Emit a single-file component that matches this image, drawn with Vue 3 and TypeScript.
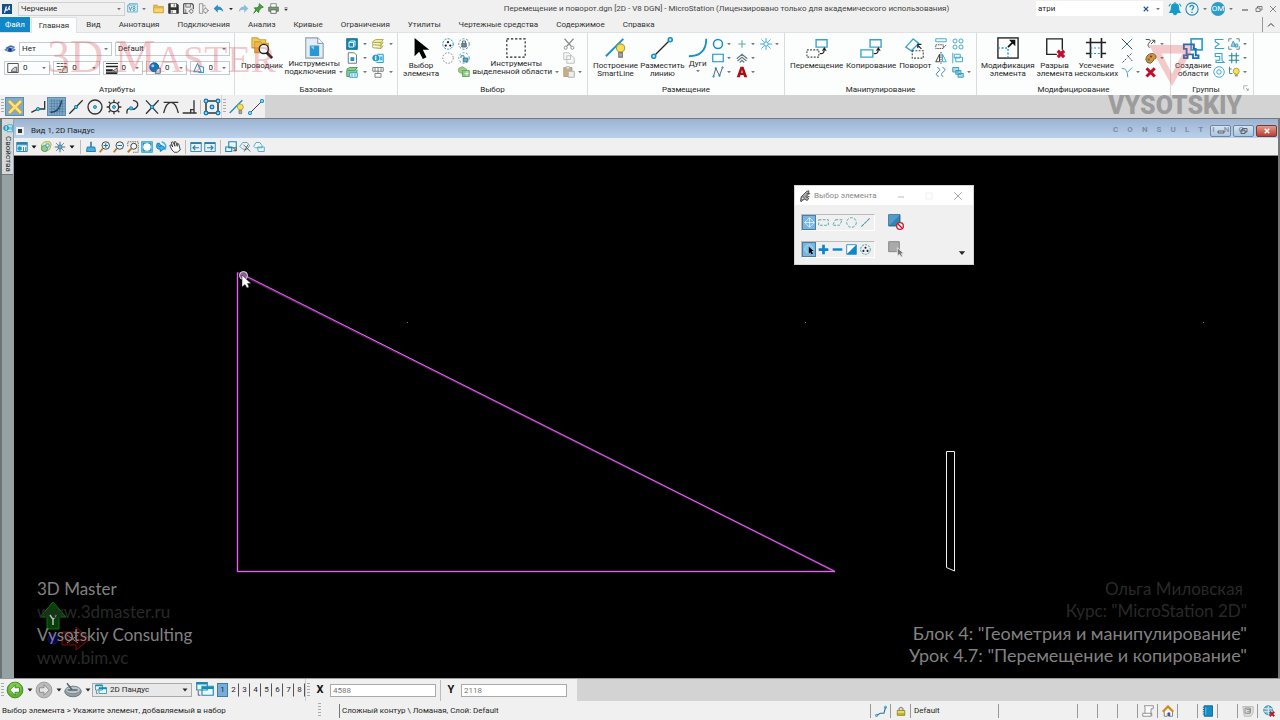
<script setup lang="ts">
import { ref } from 'vue'

interface Cell { icon?: string; caret?: boolean; label: string }
interface Big { icon: string; lines: string[]; caret?: 'inline' | 'below' }
interface Group { id: string; title: string; parts: (Big | Cell[])[] }

const icons: Record<string, string> = {
  logo: '<rect width="16" height="16" fill="#12508a" stroke="none"/><path d="M4 14L7 4M7 4Q5 10 8 10Q10 10 12 3Q10 9 13 9" stroke="#fff" stroke-width="1.8"/>',
  v8: '<path d="M1 13V3H13M3 3V1H15V13H1" stroke="#45a9cf"/><path d="M3 5L5 11L7 5M9.500 8Q8 6.500 9.500 5.200H11Q12.500 6.500 11 8H9.500Q8 9.500 9.500 11H11Q12.500 9.500 11 8" stroke="#248eb9"/>',
  folder: '<path d="M1 3H6L8 5H15V14H1Z" fill="#e9bd50" stroke="#cda039"/><path d="M1 7H15V14H1Z" fill="#f6d36e" stroke="#d8a93d"/>',
  save: '<path d="M1 1H13L15 3V15H1Z" fill="#333" stroke="#333"/><path d="M4 1H12V6H4ZM4 10H12V15H4Z" fill="#f5f5f5" stroke="none"/><path d="M9 2V5M6 11V14" stroke="#333"/>',
  saveset: '<path d="M1 1H13L15 3V9M1 1V15H7" stroke="#555" stroke-width="1.800"/><path d="M4 1H11V6H4ZM4 9V15" fill="#ddd" stroke="#666"/><circle cx="12" cy="12" r="2.500" stroke="#666"/><path d="M12 8V9M12 15V16M8 12H9" stroke="#666"/>',
  docset: '<path d="M2 1H7V15H2ZM7 4H11" stroke="#888"/><circle cx="11" cy="11" r="3" stroke="#888"/><path d="M11 6V8M11 14V16M14 11H16" stroke="#888"/>',
  undo: '<path d="M1 8L7 2V5Q14 5 15 13Q12 9 7 10V14Z" fill="#2f8ec9" stroke="none"/>',
  redo: '<path d="M15 8L9 2V5Q2 5 1 13Q4 9 9 10V14Z" fill="#8cbfdd" stroke="none"/>',
  pin: '<path d="M9 1L15 6L12 7L9 11L8 14L5 11L1 15L4 10L2 7L6 7L9 4Z" fill="#4c9d42" stroke="#347b32"/>',
  print: '<path d="M4 6V1H12V6" fill="#fff" stroke="#777"/><path d="M1 6H15V12H1Z" fill="#6aa761" stroke="#666"/><path d="M4 10H12V15H4Z" fill="#fff" stroke="#555"/>',
  caret: '<path d="M3 5H13L8 11Z" fill="currentColor" stroke="none"/>',
  custom: '<path d="M4 4H12" stroke="#333"/><path d="M3 7H13L8 13Z" fill="#333" stroke="none"/>',
  bell: '<path d="M2 12Q4 10 4 6Q4 2 8 2Q12 2 12 6Q12 10 14 12ZM6 13H10Q8 16 6 13M8 0V2" fill="#159bc9" stroke="#159bc9"/><path d="M1 5L3 2M13 2L15 5" stroke="#159bc9"/>',
  help: '<circle cx="8" cy="8" r="7" stroke="#168db8"/><path d="M5.500 6Q6 3.500 8.500 4Q11 5 9 7.500Q8 8 8 9.500M8 11V12.500" stroke="#168db8" stroke-width="1.500"/>',
  min: '<path d="M2 10H14" stroke-width="2"/>',
  vmin: '<path d="M2 8H14V12H2Z"/>',
  restore: '<path d="M2 6H10V13H2ZM5 6V3H14V10H10" stroke-width="1.300"/>',
  close: '<path d="M2 2L14 14M14 2L2 14"/>',
  up: '<path d="M2 11L8 5L14 11" stroke-width="2"/>',
  eye: '<path d="M1 9Q7 4 15 9Q9 14 1 9Z" fill="#7e9fd2" stroke="#456fae"/><path d="M3 7L9 4L14 6" stroke="#456fae" stroke-width="2"/><circle cx="8" cy="9" r="2.500" fill="#163d87" stroke="none"/>',
  level: '<path d="M1 2H15V14H1Z" stroke="#444"/><path d="M6 13H13V7Q10 6 8 9Q6 9 6 13Z" fill="#ccc" stroke="#555"/>',
  lstyle: '<path d="M1 2H14M1 6H14" stroke-dasharray="4 1" stroke="#555" stroke-width="1.500"/><path d="M8 14L10 8L15 7V14ZM2 10H7M4 14H8" stroke="#775" fill="#ddd"/>',
  weight: '<path d="M0 2H16" stroke="#222"/><path d="M0 6H16" stroke="#222" stroke-width="2"/><path d="M0 11H9M0 15H15" stroke="#222" stroke-width="3"/><path d="M9 12L15 8V14Z" fill="#ccc" stroke="#555"/>',
  ball: '<circle cx="7" cy="7" r="6" fill="#1674b9" stroke="#075394"/><circle cx="5" cy="5" r="2" fill="#8bd0f3" stroke="none"/><path d="M9 14Q9 9 15 8V15H8Z" fill="#dcebea" stroke="#557"/>',
  prio: '<path d="M1 13L6 2L11 13Z" stroke="#2878a7"/><path d="M8 5L14 7V14H7" stroke="#37a2d0" stroke-width="1.500"/>',
  explorer: '<path d="M1 1H7L9 3H16V12H1Z" fill="#f1ca58" stroke="#d0a13c"/><path d="M4 5H10L12 7H19V17H4Z" fill="#eab949" stroke="#d0a13c"/><circle cx="14" cy="13" r="5" fill="#eef7fb" stroke="#222" stroke-width="1.500"/><path d="M17 17L23 23" stroke="#222" stroke-width="3"/>',
  refdoc: '<path d="M3 1H16L22 7V23H3Z" fill="#e3edf3" stroke="#8aa1ae"/><path d="M16 1V7H22" fill="#fff" stroke="#8aa1ae"/><path d="M8 10H17V20H8Z" fill="#2998d4" stroke="#2998d4"/><path d="M8 10H12V14Z" fill="#8dd0f0" stroke="none"/>',
  cube: '<rect x="1" y="1" width="14" height="14" fill="#158abc" stroke="#075e8b"/><path d="M4 6H10V12H4ZM4 6L6 4H12L10 6M12 4V10L10 12" stroke="#fff"/>',
  sheets: '<path d="M1 5L5 2H15L12 6H2ZM1 9L12 10L15 5M1 13L12 14L15 10M1 5V13M12 6V14" fill="#f2e99c" stroke="#a8a647"/>',
  docblue: '<path d="M3 1H11L14 4V15H3Z" fill="#fff" stroke="#577"/><path d="M6 7H11V12H6Z" fill="#248cc2" stroke="none"/>',
  info: '<path d="M7 3H15V14H6" stroke="#159bc9" fill="#d4eef8"/><circle cx="5" cy="8" r="4" fill="#2ca2d3" stroke="#168db8"/><path d="M5 5V11" stroke="#fff" stroke-width="1.500"/><path d="M11 6V11M13 6V11" stroke="#159bc9"/>',
  sheetgreen: '<path d="M1 4L5 2H15L12 6H2ZM1 6V14H13L15 5" fill="#8bcc91" stroke="#459865"/><path d="M5 9H15V15H5Z" fill="#fff" stroke="#159bc9"/><path d="M8 10V14M12 10V14" stroke="#159bc9"/>',
  keys: '<path d="M1 2H15V7H1ZM4 2V7M8 2V7M12 2V7M8 7V10M4 10H12V15H4Z" stroke="#777"/>',
  arrow: '<path d="M5 1V21L10 16L14 24L18 22L14 14H21Z" fill="#000" stroke="none"/>',
  selall: '<circle cx="8" cy="8" r="7" stroke="#168db8" stroke-dasharray="3 1.500"/><circle cx="8" cy="5.500" r="1.500" fill="#222" stroke="none"/><circle cx="5" cy="10" r="1.500" fill="#222" stroke="none"/><circle cx="11" cy="10" r="1.500" fill="#222" stroke="none"/>',
  sellock: '<circle cx="8" cy="8" r="7" stroke="#4c8aa5" stroke-dasharray="3 2"/><path d="M5 7H11V12H5Z" fill="#789" stroke="#567"/><path d="M6 7V4H10V7" stroke="#567"/>',
  selnone: '<circle cx="8" cy="8" r="7" stroke="#777" stroke-dasharray="2 2"/>',
  selun: '<circle cx="8" cy="8" r="7" stroke="#49a4c9" stroke-dasharray="3 2"/><path d="M7 8H13V13H7Z" fill="#68a9c7" stroke="#378"/><path d="M4 8V5H8V8" stroke="#378"/>',
  green: '<path d="M1 3L6 1L12 5V8L8 11L1 8Z" fill="#9bcf84" stroke="#74ad66"/><path d="M6 6H15V14H6Z" fill="#8dcc82" stroke="#64a45d"/><path d="M12 7V13M9 10H14" stroke="#fff"/>',
  fence: '<rect x="2" y="2" width="20" height="20" stroke="#222" stroke-dasharray="2.500 2"/>',
  cut: '<path d="M2 1L11 11M14 1L5 11" stroke="#888" stroke-width="1.500"/><circle cx="3.500" cy="13" r="2" stroke="#888"/><circle cx="12.500" cy="13" r="2" stroke="#888"/>',
  copy: '<path d="M1 1H8L10 3V10H1ZM5 5H12L15 8V15H5Z" fill="#f7f7f7" stroke="#bbb"/>',
  paste: '<path d="M1 2H12V14H1Z" fill="#c7ae84" stroke="#b59c72"/><path d="M4 1H9V4H4ZM7 7H15V15H7Z" fill="#eee" stroke="#aaa"/>',
  smart: '<path d="M1 21L20 2" stroke="#168fca" stroke-width="2"/><circle cx="17" cy="12" r="4.500" fill="#f7dd58" stroke="#b39a2d"/><path d="M15 17H19V22H15Z" fill="#aaa" stroke="#777"/>',
  line: '<path d="M3 21L21 3" stroke="#222" stroke-width="1.300"/><circle cx="3" cy="21" r="2.200" fill="#bfeaff" stroke="#168fca" stroke-width="1.700"/><circle cx="21" cy="3" r="2.200" fill="#bfeaff" stroke="#168fca" stroke-width="1.700"/>',
  arc: '<path d="M2 21Q21 21 21 2" stroke="#168fca" stroke-width="2"/>',
  circle: '<circle cx="8" cy="8" r="6" stroke="#168fca" stroke-width="2"/>',
  plus: '<path d="M8 3V13M3 8H13" stroke="#5fae9e" stroke-width="1.500"/>',
  star: '<circle cx="8" cy="8" r="3" stroke="#168fca" fill="#fff"/><path d="M8 0V4M8 12V16M0 8H4M12 8H16M2 2L5 5M11 11L14 14M14 2L11 5M5 11L2 14" stroke="#37a2d0"/>',
  rect: '<path d="M1 3H15V13H1Z" stroke="#168fca" stroke-width="1.500"/>',
  multi: '<path d="M1 9L8 3L15 9M2 12L8 7L14 12M5 14L8 11L11 14" stroke="#667986" stroke-width="1.500"/>',
  curve: '<path d="M2 14L5 3L10 13L14 2" stroke="#456"/><circle cx="2" cy="14" r="1" stroke="#168fca"/><circle cx="5" cy="3" r="1" stroke="#168fca"/><circle cx="10" cy="13" r="1" stroke="#168fca"/><circle cx="14" cy="2" r="1" stroke="#168fca"/>',
  letter: '<path d="M1 15L6 1H10L15 15H11L10 12H6L5 15ZM7 9H9L8 5Z" fill="#a80f17" stroke="none"/>',
  move: '<path d="M11 3H23V11H11Z" stroke="#36a4ca" stroke-width="1.500"/><path d="M1 14H14V22H1Z" stroke="#444" stroke-dasharray="2 1.500"/><path d="M15 18Q20 19 20 13M18 15L20 12L22 15" stroke="#222"/>',
  copyel: '<path d="M11 3H23V11H11ZM1 14H14V22H1Z" stroke="#36a4ca" stroke-width="1.500"/><path d="M15 18Q20 19 20 13M18 15L20 12L22 15" stroke="#222"/>',
  rotate: '<path d="M2 11L10 2L16 7L8 15Z" stroke="#36a4ca" stroke-width="1.500"/><path d="M9 15H21V23H9Z" stroke="#444" stroke-dasharray="2 1.500"/><path d="M15 9L19 13M15 12V8H19" stroke="#222"/>',
  parallel: '<path d="M1 1H15V5H1Z" stroke="#36a4ca"/><path d="M1 9H11V14H1ZM11 12Q15 12 14 8" stroke="#444" stroke-dasharray="2 1"/>',
  array: '<g stroke="#36a4ca"><circle cx="4" cy="4" r="2.700"/><circle cx="12" cy="4" r="2.700"/><circle cx="4" cy="12" r="2.700"/><circle cx="12" cy="12" r="2.700"/></g>',
  mirror: '<path d="M6 3V13H1Z" stroke="#333"/><path d="M10 3V13H15Z" stroke="#37a4ca"/><path d="M8 0V16" stroke="#222" stroke-dasharray="2 1"/>',
  align: '<path d="M1 1V15M3 3H11V8H3ZM5 7H14V13H5Z" stroke="#36a4ca"/>',
  wave: '<path d="M3 2Q9 4 4 8T5 14M10 2Q16 4 11 8T11 14" stroke="#397a96"/>',
  order: '<path d="M1 2H9V8H1ZM5 6H12V11H5ZM8 10H15V15H8Z" fill="#afddea" stroke="#2c9ab9"/>',
  modify: '<rect x="1" y="1" width="22" height="22" stroke="#222" stroke-width="1.500"/><path d="M1 12H12V23" stroke="#168fca" stroke-width="1.500" stroke-dasharray="2 2"/><path d="M12 11L19 4" stroke="#111" stroke-width="2"/><path d="M13 3H20V10Z" fill="#111" stroke="none"/>',
  breakel: '<path d="M14 19H3V2H20V14" stroke="#222" stroke-width="1.500"/><path d="M15 15L22 22M22 15L15 22" stroke="#c20e2d" stroke-width="3.500"/>',
  trim: '<path d="M6 1V23M18 1V23M1 6H23M1 18H6M18 18H23" stroke="#222" stroke-width="1.800"/><path d="M6 12H18M6 18H18" stroke="#168fca" stroke-dasharray="2 2"/>',
  cross: '<path d="M1 1L15 15" stroke="#333"/><path d="M15 1L1 15" stroke="#267b9c"/>',
  trimto: '<path d="M2 14L7 9M9 7L14 2M8 4L15 12" stroke="#445" stroke-dasharray="3 1"/>',
  fillet: '<path d="M1 3Q9 3 9 15M9 8L15 2" stroke="#349ab5"/>',
  modcurve: '<path d="M1 2H6Q9 4 5 7Q2 9 6 13M8 8L13 3M9 3H13V7" stroke="#444"/>',
  palette: '<path d="M1 10Q2 2 10 2Q17 4 14 9Q11 8 11 12Q8 17 3 14Z" fill="#cb9646" stroke="#795629"/><circle cx="5" cy="10" r="1.500" fill="#357b4e" stroke="none"/><circle cx="8" cy="6" r="1.500" fill="#b32828" stroke="none"/>',
  redx: '<path d="M2 3L13 14M13 3L2 14" stroke="#c20e2d" stroke-width="4"/>',
  region: '<path d="M10 2H22V14H10Z" stroke="#36a4ca" stroke-width="2"/><path d="M2 8H13V13H15V20H18V23H12V19H6V23H2V20H5V13H2Z" stroke="#1a6dc0" stroke-width="2"/>',
  sum: '<path d="M14 2H3V5L8 8L3 12V14H15" stroke="#36a4ca" stroke-width="1.500"/>',
  snaps: '<path d="M1 5V1H5M11 1H15V5M1 11V15H5M11 15H15V11" stroke="#678"/><path d="M4 11L7 4L10 11ZM9 8H13V12H9Z" stroke="#36a4ca" fill="#9cd3e6"/>',
  region2: '<path d="M3 2H12V11L15 14H4V11H9V6H3Z" stroke="#36a4ca" stroke-width="1.400"/>',
  grid: '<path d="M5 1V15M11 1V15M1 5H15M1 11H15" stroke="#2688a5" stroke-width="1.500"/>',
  rings: '<circle cx="8" cy="8" r="7" stroke="#36a4ca"/><circle cx="8" cy="8" r="3" stroke="#36a4ca"/>',
  bulb: '<path d="M2 1V10H6M1 4H5" stroke="#486"/><circle cx="11" cy="7" r="4" fill="#f7df65" stroke="#bd9d1c"/><path d="M9 11H13V14H9Z" fill="#999" stroke="none"/>',
  launch: '<path d="M2 12V2H12M8 8L14 14M14 9V14H9" stroke="#555"/>',
  bigx: '<path d="M4 4L20 20M20 4L4 20" stroke="#c99b20" stroke-width="6"/><path d="M4 4L20 20M20 4L4 20" stroke="#ffe17c" stroke-width="3.500"/>',
  nearest: '<path d="M2 20L12 15H22V3" stroke="#333" stroke-width="2"/><circle cx="12" cy="15" r="2.500" fill="#3bc1f5" stroke="#1676aa"/>',
  keypt: '<path d="M0 3H24M0 7H24M0 11H24M0 15H24M0 19H24M4 0V24M8 0V24M12 0V24M16 0V24M20 0V24" stroke="#4c6e8b" stroke-width=".800"/><path d="M2 20Q16 20 19 2" stroke="#20425b" stroke-width="2"/><circle cx="15" cy="14" r="2" stroke="#1676aa"/>',
  midpt: '<path d="M2 22L22 2" stroke="#333" stroke-width="2"/><circle cx="12" cy="12" r="2.500" fill="#3bc1f5" stroke="#1676aa"/>',
  center: '<circle cx="12" cy="12" r="10.500" stroke="#333" stroke-width="2"/><circle cx="12" cy="12" r="2.300" fill="#3bc1f5" stroke="#1676aa"/>',
  origin: '<circle cx="12" cy="12" r="7" stroke="#333" stroke-width="2"/><path d="M12 1V5M12 19V23M1 12H5M19 12H23M4 4L7 7M17 17L20 20M20 4L17 7M7 17L4 20" stroke="#333" stroke-width="2"/><circle cx="12" cy="12" r="2.300" fill="#3bc1f5" stroke="#1676aa"/>',
  bisect: '<path d="M3 22Q2 14 8 14Q15 18 19 10Q20 3 12 2" stroke="#333" stroke-width="2"/><circle cx="9" cy="14" r="2.500" fill="#3bc1f5" stroke="#1676aa"/>',
  inter: '<path d="M3 2L21 22M22 2L3 22" stroke="#333" stroke-width="2"/><circle cx="12" cy="12" r="2.500" fill="#3bc1f5" stroke="#1676aa"/>',
  tangent: '<path d="M1 5H23M1 21Q5 5 12 5T23 21" stroke="#333" stroke-width="2"/>',
  perp: '<path d="M1 21H22M18 2V21M13 21V16H18" stroke="#333" stroke-width="2"/>',
  multisnap: '<rect x="4" y="4" width="16" height="16" stroke="#333" stroke-width="2"/><g fill="#73d3fa" stroke="#1676aa" stroke-width="1.600"><circle cx="4" cy="4" r="2.500"/><circle cx="20" cy="4" r="2.500"/><circle cx="4" cy="20" r="2.500"/><circle cx="20" cy="20" r="2.500"/><circle cx="12" cy="12" r="2.500"/></g>',
  attr: '<path d="M1 2H15V14H1ZM1 5H15" stroke="#2085b6"/><path d="M1 3H15" stroke="#2085b6" stroke-width="3"/><circle cx="5" cy="10" r="3" fill="#249bd0" stroke="none"/><path d="M10 8V14M13 8V14" stroke="#2085b6"/>',
  display: '<path d="M2 5L6 1H13L15 4L13 11L8 14L2 12Z" fill="#dceab6" stroke="#a6ad38"/><circle cx="6" cy="10" r="4" fill="#8bcf98" stroke="#56975e"/><path d="M8 4H12V8H8Z" fill="#fff" stroke="#429bb2"/>',
  sun: '<circle cx="8" cy="8" r="3" fill="#57b7dc" stroke="#45616e"/><path d="M8 1V4M8 12V15M1 8H4M12 8H15M3 3L5 5M13 3L11 5M3 13L5 11M11 11L13 13" stroke="#45616e"/>',
  brush: '<path d="M8 1V8" stroke="#2272a4" stroke-width="2"/><path d="M3 8H13L14 14H2Z" fill="#3fb7ed" stroke="#2272a4"/>',
  zoomin: '<circle cx="9" cy="6" r="5" fill="#eef8fb" stroke="#333"/><path d="M6 6H12M9 3V9" stroke="#1676aa" stroke-width="1.500"/><path d="M5 10L1 15" stroke="#b9812e" stroke-width="2.500"/>',
  zoomout: '<circle cx="9" cy="6" r="5" fill="#eef8fb" stroke="#333"/><path d="M6 6H12" stroke="#1676aa" stroke-width="1.500"/><path d="M5 10L1 15" stroke="#b9812e" stroke-width="2.500"/>',
  window: '<path d="M1 7V1H15V15H7" stroke="#666" stroke-dasharray="2 1"/><circle cx="9" cy="7" r="4" fill="#eef8fb" stroke="#333"/><path d="M6 10L1 15" stroke="#b9812e" stroke-width="2.500"/>',
  fit: '<rect x="1" y="1" width="14" height="14" fill="#83d4f0" stroke="#1c9bc7"/><path d="M4 4H12V12H4Z" fill="#fff" stroke="#fff"/><path d="M3 6V3H6M10 3H13V6M13 10V13H10M6 13H3V10" stroke="#1676aa"/>',
  rot: '<path d="M3 3Q0 11 7 11V14L14 9L7 5V8Q4 8 6 3Z" fill="#34b6f0" stroke="#1676aa"/><path d="M9 1Q17 4 13 12" stroke="#34b6f0" stroke-width="2"/>',
  hand: '<path d="M4 12L1 6L3 5L5 8L3 2L5 1L8 7L7 1L9 1L11 7L11 3L13 4L15 12L11 15H7Z" fill="#fff" stroke="#333"/>',
  prev: '<path d="M1 2H15V14H1Z" stroke="#2085b6"/><path d="M1 3H15" stroke="#2085b6" stroke-width="2"/><path d="M4 9H12M7 6L4 9L7 12" stroke="#2085b6" stroke-width="1.500"/>',
  next: '<path d="M1 2H15V14H1Z" stroke="#2085b6"/><path d="M1 3H15" stroke="#2085b6" stroke-width="2"/><path d="M4 9H12M9 6L12 9L9 12" stroke="#2085b6" stroke-width="1.500"/>',
  viewcopy: '<path d="M5 1H15V9H5ZM1 8H9V14H1Z" fill="#eefaff" stroke="#1c87b5" stroke-width="1.500"/><path d="M11 9L15 13M15 9V13H11" stroke="#333"/>',
  clip: '<path d="M1 7L5 2H11L14 6L11 11H5Z" stroke="#4ba4c3"/><path d="M6 5L15 14M12 5L7 14" stroke="#555"/>',
  mask: '<path d="M1 7L4 2H9L12 6V9H3ZM6 8H15V14H7Z" fill="#eefaff" stroke="#4ba4c3"/>',
  wrench: '<path d="M2 15L3 9L10 2L13 1V5L9 9L13 11L11 14L7 12L4 15Z" fill="#aaa" stroke="#444"/><circle cx="5" cy="11" r="2" fill="#ddd" stroke="#555"/><path d="M10 5H15M10 8L14 9" stroke="#444"/>',
  single: '<path d="M8 1L15 8L8 15L1 8ZM8 1V15M1 8H15" stroke="#d9f5ff"/>',
  block: '<path d="M1 4H15V12H1Z" stroke="#3b9a9f" stroke-dasharray="4 2"/>',
  shape: '<path d="M5 4H15L11 12H1Z" stroke="#3b9a9f" stroke-dasharray="4 2"/>',
  dashcirc: '<circle cx="8" cy="8" r="7" stroke="#3b9a9f" stroke-dasharray="4 2"/>',
  dashline: '<path d="M2 14L14 2" stroke="#3b9a9f" stroke-width="1.500" stroke-dasharray="5 1"/>',
  selnew: '<circle cx="7" cy="7" r="6" fill="#7fc5ea" stroke="#c3eaff" stroke-dasharray="2 1"/><path d="M7 4V14L9 12L11 15L13 14L11 10H14Z" fill="#000" stroke="none"/>',
  add: '<path d="M8 1V15M1 8H15" stroke="#1087c4" stroke-width="4"/>',
  sub: '<path d="M1 8H15" stroke="#1087c4" stroke-width="3.500"/>',
  invert: '<path d="M1 1H15V15H1Z" fill="#fff" stroke="#1087c4"/><path d="M15 1V15H1Z" fill="#1087c4" stroke="none"/>',
  disable: '<path d="M1 1H18V18H1Z" fill="#3184b4" stroke="#25516e"/><path d="M1 1H18L1 18Z" fill="#4e9ec9" stroke="none"/><circle cx="18" cy="18" r="5" fill="#fff" stroke="#c41b2a" stroke-width="2"/><path d="M15 15L21 21" stroke="#c41b2a" stroke-width="2"/>',
  grayarrow: '<path d="M1 1H17V16H1Z" fill="#aaa" stroke="#777"/><path d="M14 10V23L17 20L20 24L22 23L20 19H24Z" fill="#777" stroke="#eee"/>',
  back: '<circle cx="12" cy="12" r="10.500" fill="#62b52c" stroke="#398225"/><circle cx="12" cy="10" r="8" fill="#7bcf3f" stroke="none"/><path d="M5 12L12 5V9H18V15H12V19Z" fill="#fff" stroke="#398225"/>',
  forward: '<circle cx="12" cy="12" r="10.500" fill="#bbb" stroke="#999"/><path d="M19 12L12 5V9H6V15H12V19Z" fill="#e5e5e5" stroke="#888"/>',
  ink: '<ellipse cx="12" cy="14" rx="11" ry="7" fill="#929da4" stroke="#68747a"/><ellipse cx="12" cy="12" rx="10" ry="5" fill="#bac4ca" stroke="#7a858c"/><path d="M11 12L4 3M5 12H18" stroke="#56646c" stroke-width="2"/>',
  views: '<path d="M1 2H15V12H1ZM8 7H23V19H8Z" fill="#e8faff" stroke="#168ab2" stroke-width="1.500"/><path d="M1 3H15M8 9H23" stroke="#168ab2" stroke-width="3"/><path d="M3 13V19H6" stroke="#555"/>',
  snapstat: '<path d="M2 14L7 11H12L14 3" stroke="#317a95" stroke-width="1.500"/><circle cx="2" cy="14" r="1.500" stroke="#159bc9"/><circle cx="14" cy="3" r="1.500" stroke="#159bc9"/>',
  lock: '<path d="M5 8V4Q8 0 11 4V8" stroke="#888" stroke-width="2"/><path d="M2 7H14V15H2Z" fill="#c4b827" stroke="#857c22"/><path d="M3 8H13V11H3Z" fill="#e9dd64" stroke="none"/>',
  scroll: '<path d="M3 1H15V5H12V15H1V11H4V3ZM4 11H13V15" fill="#fff" stroke="#888"/>',
  home: '<path d="M3 8V15H7V11H10V15H14V8" fill="#fff" stroke="#777"/><path d="M1 9L8 2L15 9" stroke="#d28a16" stroke-width="3"/><path d="M8 10H11V15H8Z" fill="#46529d" stroke="none"/>',
  design: '<path d="M3 1H14V15H3Z" fill="#168ac2" stroke="#0c679a"/><path d="M1 3H4M1 6H4M1 9H4M1 12H4" stroke="#0c679a"/><path d="M5 3V13" stroke="#6ec9ef"/>',
  shield: '<path d="M1 2H15V10L12 15H3Z" fill="#ddd" stroke="#bbb"/><path d="M4 4H11V11H4ZM6 6H11V9H7" stroke="#888"/>',
  globe: '<circle cx="7" cy="7" r="6" fill="#6eb5cc" stroke="#34859f"/><path d="M1 5H13M1 9H13M7 1V13" stroke="#e0f4fa"/><path d="M9 9L15 15M15 9L9 15" stroke="#b91a24" stroke-width="2.500"/>'
}

const quick = ['folder', 'save', 'saveset', 'docset', 'undo', 'caret', 'redo', 'pin', 'print', 'custom']
const tabs = ['Файл', 'Главная', 'Вид', 'Аннотация', 'Подключения', 'Анализ', 'Кривые', 'Ограничения', 'Утилиты', 'Чертежные средства', 'Содержимое', 'Справка']
const attrs = [
  { icon: 'level', label: 'Цвет' }, { icon: 'lstyle', label: 'Стиль линии' }, { icon: 'weight', label: 'Толщина' },
  { icon: 'ball', label: 'Прозрачность' }, { icon: 'prio', label: 'Приоритет' }
]
const c = (icon: string, caret = false): Cell => ({ icon, caret, label: icon })
const gap: Cell = { label: '' }
const groups: Group[] = [
  { id: 'base', title: 'Базовые', parts: [
    { icon: 'explorer', lines: ['Проводник'] },
    { icon: 'refdoc', lines: ['Инструменты', 'подключения'], caret: 'inline' },
    [c('cube', true), c('docblue', true), c('sheetgreen', true)],
    [c('sheets', true), c('info'), c('keys', true)] ] },
  { id: 'select', title: 'Выбор', parts: [
    { icon: 'arrow', lines: ['Выбор', 'элемента'] },
    [c('selall'), c('selnone'), gap],
    [c('sellock'), c('selun'), c('green')],
    { icon: 'fence', lines: ['Инструменты', 'выделенной области'], caret: 'inline' },
    [c('cut'), c('copy'), c('paste', true)] ] },
  { id: 'place', title: 'Размещение', parts: [
    { icon: 'smart', lines: ['Построение', 'SmartLine'] },
    { icon: 'line', lines: ['Разместить', 'линию'] },
    { icon: 'arc', lines: ['Дуги'], caret: 'below' },
    [c('circle', true), c('rect', true), c('curve', true)],
    [c('plus', true), c('multi', true), c('letter', true)],
    [c('star', true), gap, gap] ] },
  { id: 'manip', title: 'Манипулирование', parts: [
    { icon: 'move', lines: ['Перемещение'] },
    { icon: 'copyel', lines: ['Копирование'] },
    { icon: 'rotate', lines: ['Поворот'] },
    [c('parallel'), c('mirror'), c('wave')],
    [c('array'), c('align'), c('order', true)] ] },
  { id: 'modif', title: 'Модифицирование', parts: [
    { icon: 'modify', lines: ['Модификация', 'элемента'] },
    { icon: 'breakel', lines: ['Разрыв', 'элемента'] },
    { icon: 'trim', lines: ['Усечение', 'нескольких'] },
    [c('cross'), c('trimto'), c('fillet', true)],
    [c('modcurve', true), c('palette', true), c('redx')] ] },
  { id: 'sets', title: 'Группы', parts: [
    { icon: 'region', lines: ['Создание', 'области'] },
    [c('sum'), c('region2'), c('rings')],
    [c('snaps', true), c('grid', true), c('bulb', true)] ] }
]
const isCells = (p: Big | Cell[]): p is Cell[] => Array.isArray(p)
const asCells = (p: Big | Cell[]) => p as Cell[]
const asBig = (p: Big | Cell[]) => p as Big

const snaps = ['nearest', 'keypt', 'midpt', 'center', 'origin', 'bisect', 'inter', 'tangent', 'perp']
const viewTools = ['attr', 'caret', 'display', 'sun', 'caret', '|', 'brush', 'zoomin', 'zoomout', 'window', 'fit', 'rot', 'hand', '|', 'prev', 'next', '|', 'viewcopy', 'clip', 'mask']
const methods = ['single', 'block', 'shape', 'dashcirc', 'dashline']
const modes = ['selnew', 'add', 'sub', 'invert', 'selall']
const status = ['', '', '', 'scroll', 'home', '', 'design', '', 'shield', 'globe']
const search = ref('атри')
const x = ref('4588')
const y = ref('2118')
const activeView = ref(1)
</script>

<template>
  <div class="app">
    <header class="title">
      <svg class="i10" viewBox="0 0 16 16" v-html="icons.logo" />
      <label class="combo workflow"><select aria-label="Рабочий процесс"><option>Черчение</option></select><svg class="i6 car" viewBox="0 0 16 16" v-html="icons.caret" /></label>
      <div class="quick">
        <button aria-label="v8"><svg class="i11" viewBox="0 0 16 16" v-html="icons.v8" /></button>
        <button aria-label="caret" class="first"><svg class="i6 car" viewBox="0 0 16 16" v-html="icons.caret" /></button>
        <button v-for="q in quick" :key="q" :aria-label="q"><svg :class="q === 'caret' || q === 'custom' ? 'i6' : 'i11'" viewBox="0 0 16 16" v-html="icons[q]" /></button>
      </div>
      <h1>Перемещение и поворот.dgn [2D - V8 DGN] - MicroStation (Лицензировано только для академического использования)</h1>
      <div class="search"><input v-model="search" aria-label="Поиск"><button aria-label="Очистить" class="clear"><svg class="i6" viewBox="0 0 16 16" v-html="icons.close" /></button><button aria-label="Параметры поиска"><svg class="i6 car" viewBox="0 0 16 16" v-html="icons.caret" /></button></div>
      <div class="account">
        <button aria-label="Уведомления"><svg class="i14" viewBox="0 0 16 16" v-html="icons.bell" /></button>
        <button aria-label="Справка"><svg class="i14" viewBox="0 0 16 16" v-html="icons.help" /></button>
        <svg class="i6 car" viewBox="0 0 16 16" v-html="icons.caret" />
        <button class="avatar">OM</button>
        <svg class="i6 car" viewBox="0 0 16 16" v-html="icons.caret" />
      </div>
      <div class="win">
        <button aria-label="Свернуть"><svg class="i8" viewBox="0 0 16 16" v-html="icons.min" /></button>
        <button aria-label="Восстановить"><svg class="i8" viewBox="0 0 16 16" v-html="icons.restore" /></button>
        <button aria-label="Закрыть"><svg class="i8" viewBox="0 0 16 16" v-html="icons.close" /></button>
      </div>
    </header>

    <nav class="tabs">
      <button v-for="(t, i) in tabs" :key="t" :class="{ file: i === 0, active: i === 1 }">{{ t }}</button>
      <button class="collapse" aria-label="Свернуть ленту"><svg class="i8" viewBox="0 0 16 16" v-html="icons.up" /></button>
    </nav>

    <section class="ribbon">
      <div class="group attrs">
        <div class="body">
          <div class="arow">
            <svg class="i12" viewBox="0 0 16 16" v-html="icons.eye" />
            <label class="combo tpl"><select aria-label="Шаблон"><option>Нет</option></select><svg class="i6 car" viewBox="0 0 16 16" v-html="icons.caret" /></label>
            <label class="combo lvl"><select aria-label="Слой"><option>Default</option></select><svg class="i6 car" viewBox="0 0 16 16" v-html="icons.caret" /></label>
          </div>
          <div class="arow">
            <label v-for="a in attrs" :key="a.icon" class="combo num" :class="{ wide: a.icon === 'level' || a.icon === 'lstyle' }"><svg class="i12" viewBox="0 0 16 16" v-html="icons[a.icon]" /><select :aria-label="a.label"><option>0</option></select><svg class="i6 car" viewBox="0 0 16 16" v-html="icons.caret" /></label>
          </div>
        </div>
        <h2>Атрибуты</h2>
      </div>
      <div v-for="g in groups" :key="g.id" class="group" :class="g.id">
        <div class="body">
          <template v-for="(p, i) in g.parts" :key="i">
            <div v-if="isCells(p)" class="cells">
              <template v-for="(s, j) in asCells(p)" :key="j">
                <button v-if="s.icon" :aria-label="s.label"><svg class="i12" viewBox="0 0 16 16" v-html="icons[s.icon]" /><svg v-if="s.caret" class="i6 car" viewBox="0 0 16 16" v-html="icons.caret" /></button>
                <span v-else />
              </template>
            </div>
            <button v-else class="big" :class="{ tight: asBig(p).caret }">
              <svg class="i22" viewBox="0 0 24 24" v-html="icons[asBig(p).icon]" />
              <span v-for="(l, k) in asBig(p).lines" :key="l">{{ l }}<svg v-if="asBig(p).caret === 'inline' && k === 1" class="i6 car" viewBox="0 0 16 16" v-html="icons.caret" /></span>
              <svg v-if="asBig(p).caret === 'below'" class="i6 car" viewBox="0 0 16 16" v-html="icons.caret" />
            </button>
          </template>
        </div>
        <h2>{{ g.title }}</h2>
        <svg v-if="g.id === 'sets'" class="i6 launcher" viewBox="0 0 16 16" v-html="icons.launch" />
      </div>
    </section>

    <section class="snapbar">
      <div class="dock">
        <i class="grip" />
        <button class="on" aria-label="AccuSnap"><svg class="i18" viewBox="0 0 24 24" v-html="icons.bigx" /></button>
        <i class="space" />
        <button v-for="s in snaps" :key="s" :class="{ on: s === 'keypt' }" :aria-label="s"><svg class="i16" viewBox="0 0 24 24" v-html="icons[s]" /></button>
        <i class="sep" />
        <button aria-label="multisnap"><svg class="i18" viewBox="0 0 24 24" v-html="icons.multisnap" /></button>
      </div>
      <div class="dock">
        <i class="grip" />
        <button aria-label="smart"><svg class="i16" viewBox="0 0 24 24" v-html="icons.smart" /></button>
        <button aria-label="line"><svg class="i16" viewBox="0 0 24 24" v-html="icons.line" /></button>
      </div>
    </section>

    <main class="work">
      <aside><button class="props"><svg class="i10" viewBox="0 0 16 16" v-html="icons.info" /><span>Свойства</span></button></aside>
      <section class="view">
        <div class="vtitle">
          <i class="vico" /><h3>Вид 1, 2D Пандус</h3>
          <button aria-label="Свернуть вид"><svg class="i8" viewBox="0 0 16 16" v-html="icons.vmin" /></button>
          <button aria-label="Восстановить вид"><svg class="i8" viewBox="0 0 16 16" v-html="icons.restore" /></button>
          <button class="x" aria-label="Закрыть вид"><svg class="i6" viewBox="0 0 16 16" v-html="icons.close" /></button>
        </div>
        <div class="vtools">
          <template v-for="(v, i) in viewTools" :key="i">
            <i v-if="v === '|'" class="sep" />
            <button v-else :aria-label="v" :class="{ slim: v === 'caret' }"><svg :class="v === 'caret' ? 'i8' : 'i12'" viewBox="0 0 16 16" v-html="icons[v]" /></button>
          </template>
        </div>
        <div class="canvas">
          <svg class="drawing" viewBox="0 0 1264 522" preserveAspectRatio="xMinYMin meet">
            <path d="M393 166.500H394M791 166.500H792M1189 166.500H1190" stroke="#777" />
            <path d="M223.500 116.500V415.500H821L223.500 116.500" stroke="#5a1e63" stroke-width="2" />
            <path d="M223.500 116.500V415.500H821L228 118" stroke="#e466ee" />
            <path d="M932.500 295.500H940.500V415L932.500 411.500Z" stroke="#eee" />
            <circle cx="229.500" cy="119.500" r="4" fill="#8a6090" stroke="#ddd" />
            <path d="M228 119V131L231 128.500L233 132L235 131L233.500 127.500H237Z" fill="#fff" stroke="#222" stroke-width=".500" />
            <path d="M39 446L52 461H45V473H33V461H26Z" fill="#063f08" stroke="#116d14" />
            <path d="M48 476H62V471L76 483L62 494V489H48Z" fill="#210304" stroke="#681014" />
            <circle cx="39" cy="483" r="5" fill="#05054a" stroke="#10107a" />
            <path d="M36 459L39 463.500L42 459M39 463.500V469" stroke="#bbb" stroke-width="1.500" />
            <path d="M53 479L64 487M64 479L53 487" stroke="#8a7777" />
          </svg>
          <div class="credit left"><p>3D Master</p><p class="dim">www.3dmaster.ru</p><p>Vysotskiy Consulting</p><p class="dim">www.bim.vc</p></div>
          <div class="credit right"><p class="dim inset">Ольга Миловская</p><p class="dim">Курс: "MicroStation 2D"</p><p class="lesson">Блок 4: "Геометрия и манипулирование"</p><p class="lesson">Урок 4.7: "Перемещение и копирование"</p></div>
          <div class="dialog" role="dialog" aria-label="Выбор элемента">
            <div class="dtitle"><svg class="i12" viewBox="0 0 16 16" v-html="icons.wrench" /><h4>Выбор элемента</h4>
              <button aria-label="Свернуть окно" class="faint"><svg class="i8" viewBox="0 0 16 16" v-html="icons.min" /></button>
              <button aria-label="Развернуть окно" class="fainter"><svg class="i8" viewBox="0 0 16 16"><path d="M2 2H14V14H2Z" /></svg></button>
              <button aria-label="Закрыть окно"><svg class="i10" viewBox="0 0 16 16" v-html="icons.close" /></button></div>
            <div class="drow"><div class="set"><button v-for="(m, i) in methods" :key="m" :class="{ on: i === 0 }" :aria-label="m"><svg class="i11" viewBox="0 0 16 16" v-html="icons[m]" /></button></div><button aria-label="disable"><svg class="i16" viewBox="0 0 24 24" v-html="icons.disable" /></button></div>
            <div class="drow"><div class="set"><button v-for="(m, i) in modes" :key="m" :class="{ on: i === 0 }" :aria-label="m"><svg class="i11" viewBox="0 0 16 16" v-html="icons[m]" /></button></div><button aria-label="select all"><svg class="i16" viewBox="0 0 24 24" v-html="icons.grayarrow" /></button><button class="more" aria-label="Подробнее"><svg class="i10" viewBox="0 0 16 16" v-html="icons.caret" /></button></div>
          </div>
        </div>
      </section>
    </main>

    <section class="bottom">
      <div class="dock nav">
        <i class="grip" />
        <button aria-label="Назад"><svg class="i18" viewBox="0 0 24 24" v-html="icons.back" /></button><svg class="i8 dd" viewBox="0 0 16 16" v-html="icons.caret" />
        <button aria-label="Вперед"><svg class="i18" viewBox="0 0 24 24" v-html="icons.forward" /></button><svg class="i8 dd" viewBox="0 0 16 16" v-html="icons.caret" />
        <button aria-label="Модели"><svg class="i18" viewBox="0 0 24 24" v-html="icons.ink" /></button><svg class="i8 dd" viewBox="0 0 16 16" v-html="icons.caret" />
        <label class="combo vsel"><svg class="i12" viewBox="0 0 24 24" v-html="icons.views" /><select aria-label="Группа видов"><option>2D Пандус</option></select><svg class="i8" viewBox="0 0 16 16" v-html="icons.caret" /></label>
        <button aria-label="Виды" class="vs"><svg class="i18" viewBox="0 0 24 24" v-html="icons.views" /></button>
        <div class="nums"><button v-for="n in 8" :key="n" :class="{ on: n === activeView }" @click="activeView = n">{{ n }}</button></div>
      </div>
      <div class="dock coords">
        <i class="grip" />
        <label for="cx">X</label><input id="cx" v-model="x"><i class="sep" />
        <label for="cy">Y</label><input id="cy" v-model="y">
      </div>
    </section>

    <footer class="status">
      <span class="prompt">Выбор элемента &gt; Укажите элемент, добавляемый в набор</span><i class="grip" />
      <span class="msg">Сложный контур \ Ломаная, Слой: Default</span>
      <span class="cell"><svg class="i12" viewBox="0 0 16 16" v-html="icons.snapstat" /></span>
      <span class="cell"><svg class="i10" viewBox="0 0 16 16" v-html="icons.lock" /></span>
      <span class="cell level">Default</span>
      <span v-for="(s, i) in status" :key="i" class="cell"><svg v-if="s" class="i12" viewBox="0 0 16 16" v-html="icons[s]" /></span>
    </footer>

    <div class="mark master"><b>3D M</b>ASTER</div>
    <svg class="vee" viewBox="0 0 48 44"><path d="M0 0H48L24 43ZM13 9L24 30L35 9Z" fill="#e05555" fill-rule="evenodd" /></svg>
    <div class="mark vys">VYSOTSKIY</div>
    <div class="mark cons"><span v-for="(l, i) in 'CONSULTING'" :key="i">{{ l }}</span></div>
  </div>
</template>

<style>
html, body { margin: 0; background: #f0f0f0; }
</style>

<style scoped>
.app { position: relative; display: flex; flex-direction: column; min-height: 100vh; overflow: hidden; background: #f0f0f0; color: #262626; font: 8px/10px Roboto, "Open Sans", sans-serif; }
.app * { box-sizing: border-box; }
button, input, select { font: inherit; color: inherit; margin: 0; padding: 0; border: 0; background: none; }
button { display: flex; align-items: center; justify-content: center; white-space: nowrap; }
h1, h2, h3, h4, p { margin: 0; font-size: 8px; font-weight: 400; white-space: nowrap; }
svg { display: block; flex: none; fill: none; stroke: currentColor; stroke-width: 1.2px; }
.i6 { width: 6px; height: 6px; }
.i8 { width: 8px; height: 8px; }
.i10 { width: 10px; height: 10px; }
.i11 { width: 11px; height: 11px; }
.i12 { width: 12px; height: 12px; }
.i14 { width: 14px; height: 14px; }
.i16 { width: 16px; height: 16px; }
.i18 { width: 18px; height: 18px; }
.i22 { width: 22px; height: 22px; }
select { appearance: none; flex: 1; min-width: 0; outline: 0; }
.combo { display: flex; align-items: center; height: 14px; padding: 0 2px; border: 1px solid #c3ccd4; background: #fff; }
.grip { width: 3px; height: 15px; margin: 0 1px; flex: none; background: repeating-linear-gradient(#aaa 0 1px, transparent 1px 3px); }
.sep { width: 1px; height: 14px; flex: none; background: #bbb; }
.car { color: #777; }

.title { display: flex; align-items: center; height: 17px; padding: 0 3px 0 2px; }
.workflow { width: 107px; margin-left: 6px; background: #f0f0f0; border-color: #d0d0d0; }
.quick { display: flex; align-items: center; gap: 4px; padding-left: 2px; }
.quick .first { margin: 0 2px 0 -1px; }
.title h1 { flex: 1; padding-left: 128px; text-align: center; color: #444; }
.search { display: flex; align-items: center; width: 127px; height: 15px; padding: 0 2px; gap: 6px; background: #fff; }
.search input { flex: 1; min-width: 0; outline: 0; }
.clear { color: #24558e; }
.clear svg { stroke-width: 3px; }
.account { display: flex; align-items: center; gap: 3px; padding-left: 5px; }
.avatar { width: 14px; height: 14px; border-radius: 50%; background: #2a9dc8; color: #fff; }
.win { display: flex; gap: 6px; margin-left: 7px; color: #444; }

.tabs { display: flex; height: 16px; align-items: stretch; border-bottom: 1px solid #dfe2e5; color: #333; }
.tabs button { padding: 1px 9px 0; }
.tabs .file { padding: 0 5px; margin-right: 1px; background: #1287c8; color: #fff; }
.tabs .active { padding: 0 7px; margin-bottom: -1px; background: #fcfdfd; border: 1px solid #dfe2e5; border-bottom: 0; }
.tabs .collapse { margin-left: auto; border-left: 1px solid #999; padding: 0 4px; margin-right: 1px; }

.ribbon { display: flex; height: 62px; background: #fcfdfd; }
.group { position: relative; display: flex; flex-direction: column; justify-content: space-between; border-right: 1px solid #d9dcdf; flex: none; }
.group h2 { text-align: center; height: 10px; }
.body { display: flex; justify-content: space-between; padding-top: 3px; }
.attrs { width: 235px; }
.attrs .body { flex-direction: column; gap: 5px; padding: 9px 4px 0; }
.base { width: 163px; }
.base .body { padding-left: 6px; padding-right: 2px; }
.select { width: 190px; }
.select .body, .place .body, .manip .body { padding-left: 5px; padding-right: 3px; }
.place { width: 197px; }
.manip { width: 192px; }
.modif { width: 194px; }
.modif .body, .sets .body { padding-left: 4px; padding-right: 4px; }
.sets { width: 83px; }
.sets h2 { padding-right: 12px; }
.arow { display: flex; align-items: center; gap: 3px; }
.attrs .combo { background: transparent; }
.tpl { flex: 4; }
.lvl { flex: 5; }
.num { flex: 6; gap: 4px; }
.wide { flex: 7; }
.cells { display: grid; grid-template-rows: repeat(3, 14px); padding-top: 1px; justify-items: start; }
.cells button { gap: 2px; padding: 0 1px; }
.base .cells button { gap: 4px; }
.big { flex-direction: column; justify-content: flex-start; padding-top: 1px; }
.big > span { display: flex; align-items: center; gap: 2px; line-height: 8px; }
.big .i22 { margin-bottom: 3px; }
.tight .i22 { margin-bottom: 1px; }
.launcher { position: absolute; right: 4px; bottom: 4px; }

.snapbar { display: flex; height: 24px; gap: 1px; background: #d3d3d3; border-bottom: 1px solid #777; }
.dock { display: flex; align-items: center; background: #f0f0f0; }
.snapbar button { width: 19px; height: 19px; }
.snapbar .on { background: #7fabcf; outline: 1px solid #5e8bb0; outline-offset: -1px; }
.space { width: 4px; }
.snapbar .sep { margin: 0 1px; }

.work { display: flex; flex: 1; min-height: 0; border-right: 2px solid #777; }
aside { width: 14px; flex: none; border-left: 2px solid #6b7474; background: #94a2a3; }
.props { flex-direction: column; justify-content: flex-start; gap: 3px; width: 11px; height: 56px; padding-top: 4px; background: #d5d9db; border-bottom: 1px solid #777; }
.props span { writing-mode: vertical-rl; }
.view { display: flex; flex-direction: column; flex: 1; min-width: 0; }
.vtitle { display: flex; align-items: center; gap: 2px; height: 19px; padding: 5px 1px 0 2px; background: linear-gradient(#9cb4d2, #b9d1ea); }
.vtitle h3 { flex: 1; }
.vico { width: 8px; height: 8px; margin-right: 5px; background: #333; border: 2px solid #eee; }
.vtitle button { width: 21px; height: 12px; border: 1px solid #70879e; border-radius: 2px; background: linear-gradient(#d5e4f3, #aac4df); }
.vtitle .x { background: linear-gradient(#e39a8b, #bd3e2e); color: #fff; border-color: #7b3831; }
.vtitle .x svg { stroke-width: 4px; }
.vtools { display: flex; align-items: center; height: 18px; padding-left: 1px; background: #f0f0f0; border-bottom: 1px solid #888; }
.vtools button { width: 14px; height: 14px; color: #111; }
.vtools .slim { width: 10px; }
.vtools .sep { margin: 0 3px; }

.canvas { position: relative; flex: 1; min-height: 0; background: #000; overflow: hidden; }
.drawing { position: absolute; left: 0; top: 0; width: 100%; aspect-ratio: 1264 / 522; stroke-width: 1px; }
.credit { position: absolute; color: #828282; font-family: Lato, sans-serif; }
.credit p { font-size: 17px; line-height: 23px; }
.credit .dim { color: #292929; }
.left { left: 23px; bottom: 9px; }
.right { right: 31px; bottom: 12px; text-align: right; }
.right .inset { padding-right: 4px; }
.credit.right p { line-height: 22px; }
.credit.right .lesson { font-size: 18px; }
.dialog { position: absolute; left: 780px; top: 29px; width: 180px; height: 80px; background: #f0f0f0; border: 1px solid #d5d5d5; }
.dtitle { display: flex; align-items: center; height: 19px; padding: 0 10px 0 4px; background: #fff; color: #888; }
.dtitle h4 { flex: 1; margin-left: 3px; }
.dtitle button { margin-left: 20px; }
.faint { color: #bbb; }
.fainter { color: #e5e5e5; }
.drow { display: flex; align-items: center; padding: 7px 6px 0; height: 27px; }
.set { display: flex; width: 74px; height: 17px; border: 1px solid #bbb; border-right-color: #fff; border-bottom-color: #fff; margin-right: 13px; }
.set button { width: 14px; }
.set .on { background: #7db4dc; outline: 1px solid #487fa8; outline-offset: -1px; }
.more { margin-left: auto; padding-top: 8px; }

.bottom { display: flex; height: 23px; background: #d3d3d3; border-top: 1px solid #999; }
.nav > button { width: 20px; }
.dd { margin: 0 0 0 1px; }
.vsel { width: 100px; background: #e8e8e8; border-color: #aaa; gap: 3px; }
.nav > .vs { margin: 0 2px 0 3px; }
.nums { display: flex; }
.nums button { width: 11px; height: 14px; border: 1px solid #eee; border-right: 1px solid #555; }
.nums .on { background: #76aedb; outline: 1px solid #47799d; outline-offset: -1px; }
.coords { gap: 1px; padding-right: 7px; border-left: 1px solid #ccc; }
.coords label { width: 18px; font-size: 11px; font-weight: 700; color: #111; text-align: center; }
.coords .grip { margin-right: 0; }
.coords input { width: 106px; height: 13px; margin-right: 3px; padding: 0 2px; border: 1px solid #aaa; background: #fff; color: #777; }
.coords .sep { height: 21px; }

.status { display: flex; align-items: center; height: 19px; padding-left: 2px; }
.prompt { width: 315px; white-space: nowrap; }
.msg { flex: 1; margin-left: 17px; padding-left: 2px; height: 14px; line-height: 14px; border-left: 1px solid #777; white-space: nowrap; }
.cell { display: flex; align-items: center; justify-content: center; width: 20px; height: 14px; border-left: 1px solid #999; }
.level { width: 89px; justify-content: flex-start; padding-left: 3px; margin-right: 79px; border-right: 1px solid #999; }
.level + .cell { margin-left: -1px; }
.cell:last-child { width: 23px; }

.mark { position: absolute; white-space: nowrap; pointer-events: none; }
.master { left: 47px; top: 35px; font: 38px/44px "Liberation Serif", serif; color: rgba(216, 70, 80, .3); }
.master b { font-weight: 400; font-size: 46px; }
.vee { position: absolute; right: 84px; top: 45px; width: 48px; height: 42px; opacity: .3; stroke: none; }
.vys { right: 38px; top: 94px; font: 900 25px/24px Roboto, sans-serif; color: rgba(120, 120, 120, .6); }
.cons { right: 36px; top: 125px; width: 131px; display: flex; justify-content: space-between; color: rgba(80, 90, 105, .55); font-weight: 700; }
</style>
